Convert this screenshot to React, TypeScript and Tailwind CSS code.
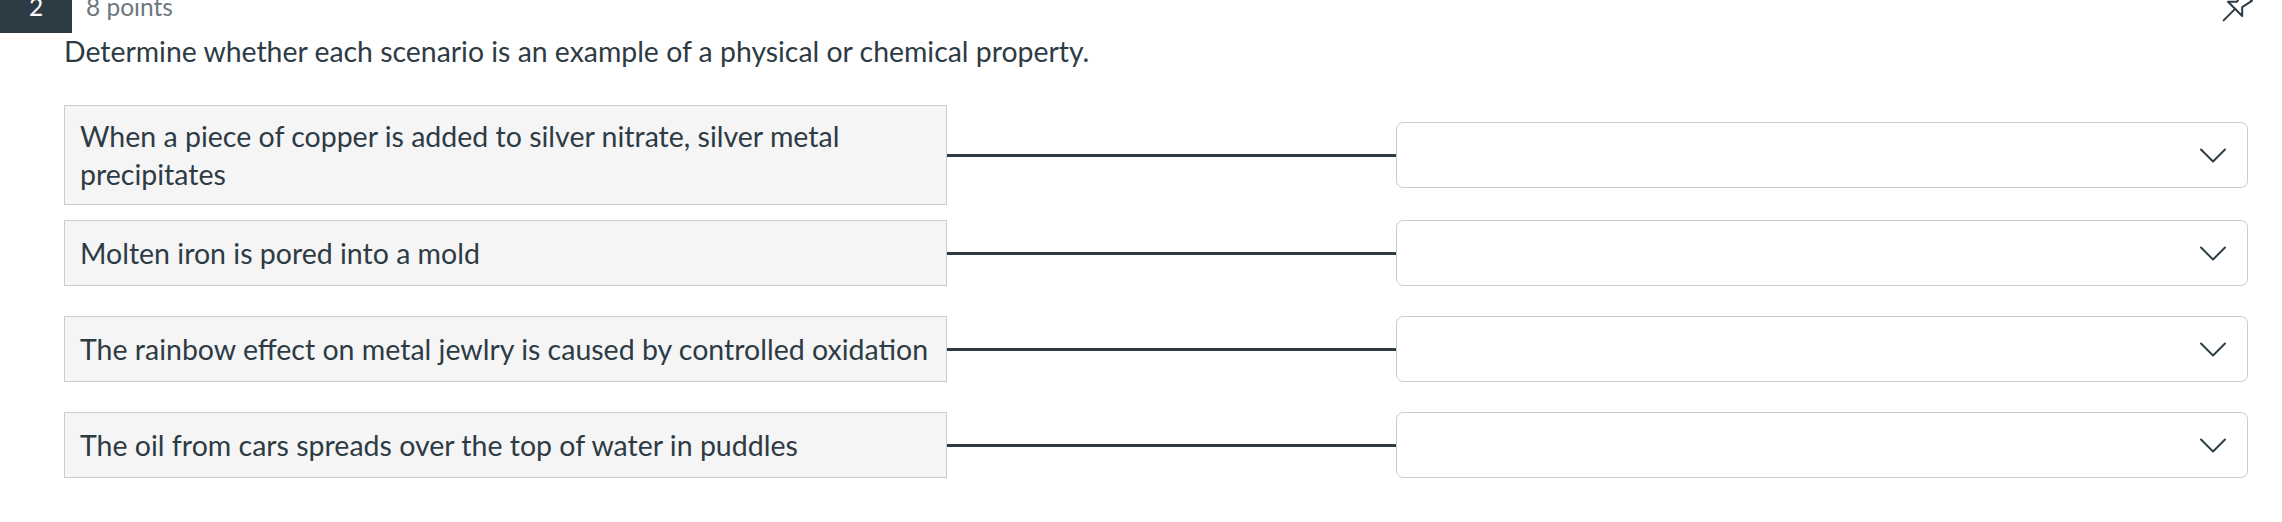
import React from 'react'

const font = "font-['Lato','Noto_Sans','Liberation_Sans',sans-serif]"

// Enunciados da questão (lado esquerdo)
const itens = [
  'When a piece of copper is added to silver nitrate, silver metal precipitates',
  'Molten iron is pored into a mold',
  'The rainbow effect on metal jewlry is caused by controlled oxidation',
  'The oil from cars spreads over the top of water in puddles',
]

function Chevron() {
  return (
    <svg width="26" height="15" viewBox="0 0 26 15" fill="none">
      <path d="M1 1.5 L13 13.5 L25 1.5" stroke="#2d3b45" strokeWidth="2" strokeLinecap="round" strokeLinejoin="round" />
    </svg>
  )
}

function Pin() {
  return (
    <svg className="absolute left-[2216px] top-[-12px]" width="40" height="40" viewBox="0 0 32 32" fill="none">
      <g transform="rotate(45 16 16)" stroke="#2d3b45" strokeWidth="1.6" strokeLinejoin="round" strokeLinecap="round">
        <path d="M11 3 H21 L19 12 L24 17 H8 L13 12 Z" />
        <path d="M16 17 V30" />
      </g>
    </svg>
  )
}

function Linha({ texto }: { texto: string }) {
  return (
    <div className="flex items-center min-h-[96px]">
      <div className="w-[883px] shrink-0 min-h-[66px] flex items-center border border-[#c7cdd1] bg-[#f5f5f5] pl-[15px] pr-[10px] py-[11px] text-[28.5px] leading-[38px]">
        {texto}
      </div>
      <div className="flex-1 h-[3px] bg-[#2d3b45]"></div>
      <div className="w-[852px] shrink-0 h-[66px] border border-[#c7cdd1] rounded-[7px] bg-white flex items-center justify-end pr-[21px]">
        <Chevron />
      </div>
    </div>
  )
}

export default function App() {
  return (
    <div className={`relative w-[2282px] h-[522px] overflow-hidden bg-white text-[#2d3b45] ${font}`}>
      {/* cabeçalho (cortado no topo) */}
      <div className="flex items-center -mt-[22px] h-[55px] pt-[4px]">
        <div className="w-[72px] h-[55px] -mt-[4px] pt-[4px] bg-[#2d3b45] text-white text-[24.5px] flex items-center justify-center">
          2
        </div>
        <div className="ml-[14px] text-[24.5px] text-[#6b7780]">8 points</div>
      </div>
      <Pin />

      <div className="pl-[64px] pr-[34px]">
        <p className="text-[28.4px] leading-[36px]">
          Determine whether each scenario is an example of a physical or chemical property.
        </p>
        <div className="mt-[36px] flex flex-col">
          {itens.map((t) => (
            <Linha key={t} texto={t} />
          ))}
        </div>
      </div>
    </div>
  )
}
